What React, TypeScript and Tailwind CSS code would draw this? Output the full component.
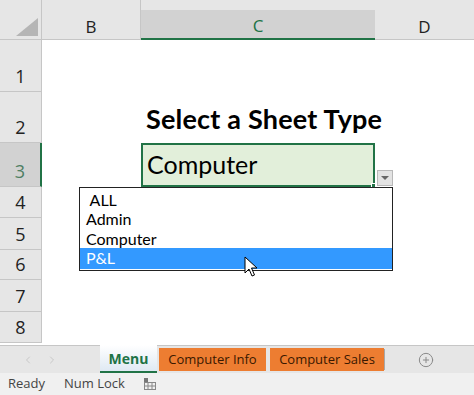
import { CirclePlus, ChevronLeft, ChevronRight } from "lucide-react";

const rows = [
  { n: "1", h: "h-[52px]" },
  { n: "2", h: "h-[51px]" },
  { n: "3", h: "h-[44px]" },
  { n: "4", h: "h-[31px]" },
  { n: "5", h: "h-[32px]" },
  { n: "6", h: "h-[30px]" },
  { n: "7", h: "h-[32px]" },
  { n: "8", h: "h-[31px]" },
];

const ui = { fontFamily: '"Open Sans", "Noto Sans", sans-serif' };
const cell = { fontFamily: 'Lato, "Liberation Sans", sans-serif' };

function Cursor() {
  return (
    <svg width="14" height="22" viewBox="0 0 14 22" className="absolute left-[244px] top-[256px]">
      <path d="M1 1 L1 17 L5 13 L8 20 L10.5 19 L7.5 12 L13 12 Z" fill="#fff" stroke="#000" strokeWidth="1" strokeLinejoin="round" />
    </svg>
  );
}

export default function App() {
  return (
    <div className="relative w-[474px] h-[395px] overflow-hidden bg-white" style={ui}>
      {/* column headers */}
      <div className="flex h-[40px] bg-[#e6e6e6]">
        <div className="w-[42px] pt-[10px] border-r border-[#c6c6c6] border-b">
          <div className="flex justify-end items-end h-full pr-[3px] pb-[3px]">
            <div className="w-0 h-0 border-l-[22px] border-l-transparent border-b-[18px] border-b-[#b5b5b5]" />
          </div>
        </div>
        <div className="w-[99px] pt-[14px] flex items-center justify-center text-[17px] text-[#222] border-r border-b border-[#c6c6c6]">
          B
        </div>
        <div className="w-[234px] mt-[10px] pt-[4px] bg-[#d2d2d2] flex items-center justify-center text-[17px] text-[#217346] border-b-2 border-[#217346]">
          C
        </div>
        <div className="w-[99px] pt-[14px] flex items-center justify-center text-[17px] text-[#222] border-b border-[#c6c6c6]">
          D
        </div>
      </div>

      {/* grid body */}
      <div className="flex">
        <div className="w-[42px] flex flex-col">
          {rows.map((r) => (
            <div
              key={r.n}
              className={`${r.h} flex items-end justify-center pb-[1px] text-[18px] border-b border-[#c6c6c6] ${
                r.n === "3"
                  ? "bg-[#d2d2d2] text-[#4f7f63] border-r-2 border-r-[#217346]"
                  : "bg-[#e6e6e6] text-[#222] border-r border-r-[#c6c6c6]"
              }`}
            >
              {r.n}
            </div>
          ))}
        </div>
        <div className="flex-1 flex flex-col" style={cell}>
          <div className="h-[52px]" />
          <div className="h-[51px] flex items-end pb-[11px] pl-[104px]">
            <span className="text-[27px] font-bold text-black leading-none tracking-[0.2px]">Select a Sheet Type</span>
          </div>
          <div className="h-[44px] flex">
            <div className="w-[99px]" />
            <div className="relative w-[234px] bg-[#e2efda] border-2 border-[#217346] flex items-center pl-[4px] text-[25px] text-black">
              Computer
              <div className="absolute -right-[3px] -bottom-[3px] w-[5px] h-[5px] bg-[#217346] border border-white" />
            </div>
          </div>
        </div>
      </div>

      {/* dropdown arrow */}
      <div className="absolute left-[377px] top-[170px] w-[16px] h-[16px] bg-[#e3e3e3] border border-[#b8b8b8] flex items-center justify-center">
        <div className="w-0 h-0 border-l-[4px] border-r-[4px] border-t-[4px] border-l-transparent border-r-transparent border-t-[#666]" />
      </div>

      {/* dropdown list */}
      <div className="absolute left-[79px] top-[187px] w-[314px] h-[84px] bg-white border border-[#222] flex flex-col text-[16px] leading-[20px] text-black" style={cell}>
        <div className="h-[20px] pl-[6px] pt-[2px]">&nbsp;ALL</div>
        <div className="h-[20px] pl-[6px] pt-[1px]">Admin</div>
        <div className="h-[20px] pl-[6px] pt-[1px]">Computer</div>
        <div className="h-[21px] pl-[6px] bg-[#3399ff] text-white">P&amp;L</div>
      </div>
      <Cursor />

      {/* sheet tabs */}
      <div className="absolute left-0 top-[345px] w-[474px] h-[28px] bg-[#e6e6e6] border-t border-[#c6c6c6] flex items-stretch text-[13px]">
        <div className="w-[100px] flex items-center gap-[12px] pl-[22px] text-[#c8c8c8]">
          <ChevronLeft size={12} strokeWidth={2} />
          <ChevronRight size={12} strokeWidth={2} />
        </div>
        <div className="w-[57px] -mt-px bg-gradient-to-b from-white to-[#dfe9f3] border-b-2 border-[#217346] flex items-center justify-center font-bold text-[14px] text-[#217346]">
          Menu
        </div>
        <div className="w-[2px]" />
        <div className="w-[107px] my-[2px] bg-[#ed7d31] flex items-center justify-center text-[#3a1800]">
          Computer Info
        </div>
        <div className="w-[4px]" />
        <div className="w-[114px] my-[2px] bg-[#ed7d31] flex items-center justify-center text-[#3a1800]">
          Computer Sales
        </div>
        <div className="w-px my-[3px] bg-[#a8a8a8]" />
        <div className="flex-1 flex items-center justify-center pr-[8px] text-[#8a8a8a]">
          <CirclePlus size={16} strokeWidth={1.5} />
        </div>
      </div>

      {/* status bar */}
      <div className="absolute left-0 top-[373px] w-[474px] h-[22px] bg-[#f0f0f0] flex items-center text-[13px] text-[#444]">
        <span className="pl-[8px]">Ready</span>
        <span className="pl-[19px]">Num Lock</span>
        <svg width="12" height="12" viewBox="0 0 12 12" className="ml-[19px]">
          <rect x="0" y="0" width="4" height="4" fill="#777" />
          <rect x="0.5" y="4.5" width="11" height="7" fill="none" stroke="#888" />
          <line x1="0.5" y1="8" x2="11.5" y2="8" stroke="#888" />
          <line x1="4" y1="4.5" x2="4" y2="11.5" stroke="#888" />
          <line x1="8" y1="4.5" x2="8" y2="11.5" stroke="#888" />
        </svg>
      </div>
    </div>
  );
}
